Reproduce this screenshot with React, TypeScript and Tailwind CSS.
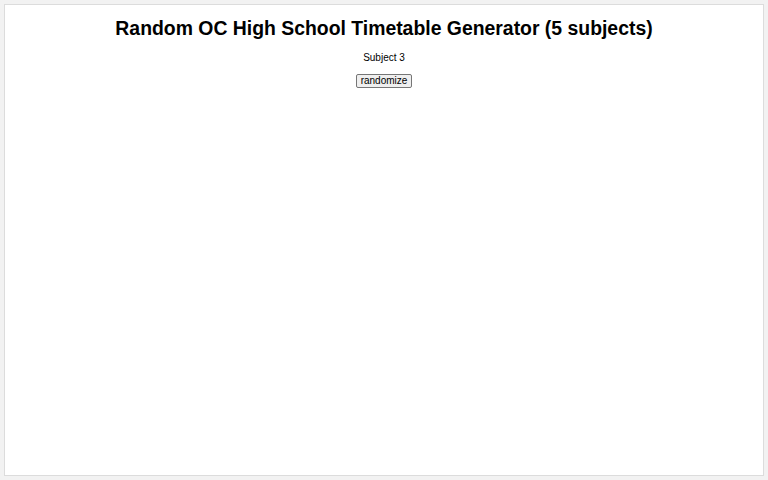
export default function App() {
  return (
    <div className="h-[480px] w-[768px] bg-[#f2f2f2] p-[4px]" style={{ fontFamily: '"Liberation Sans", Arial, sans-serif' }}>
      <div className="flex h-full flex-col items-center border border-[#dcdcdc] bg-white">
        <h1 className="mt-[12px] text-[19.4px] font-bold leading-[23px] text-black">Random OC High School Timetable Generator (5 subjects)</h1>
        <div className="mt-[12px] text-[10px] leading-[12px] text-black">Subject 3</div>
        <button className="mt-[10px] rounded-[2px] border border-[#767676] bg-[#efefef] px-[3.5px] text-[10px] leading-[12px] text-black">randomize</button>
      </div>
    </div>
  );
}
